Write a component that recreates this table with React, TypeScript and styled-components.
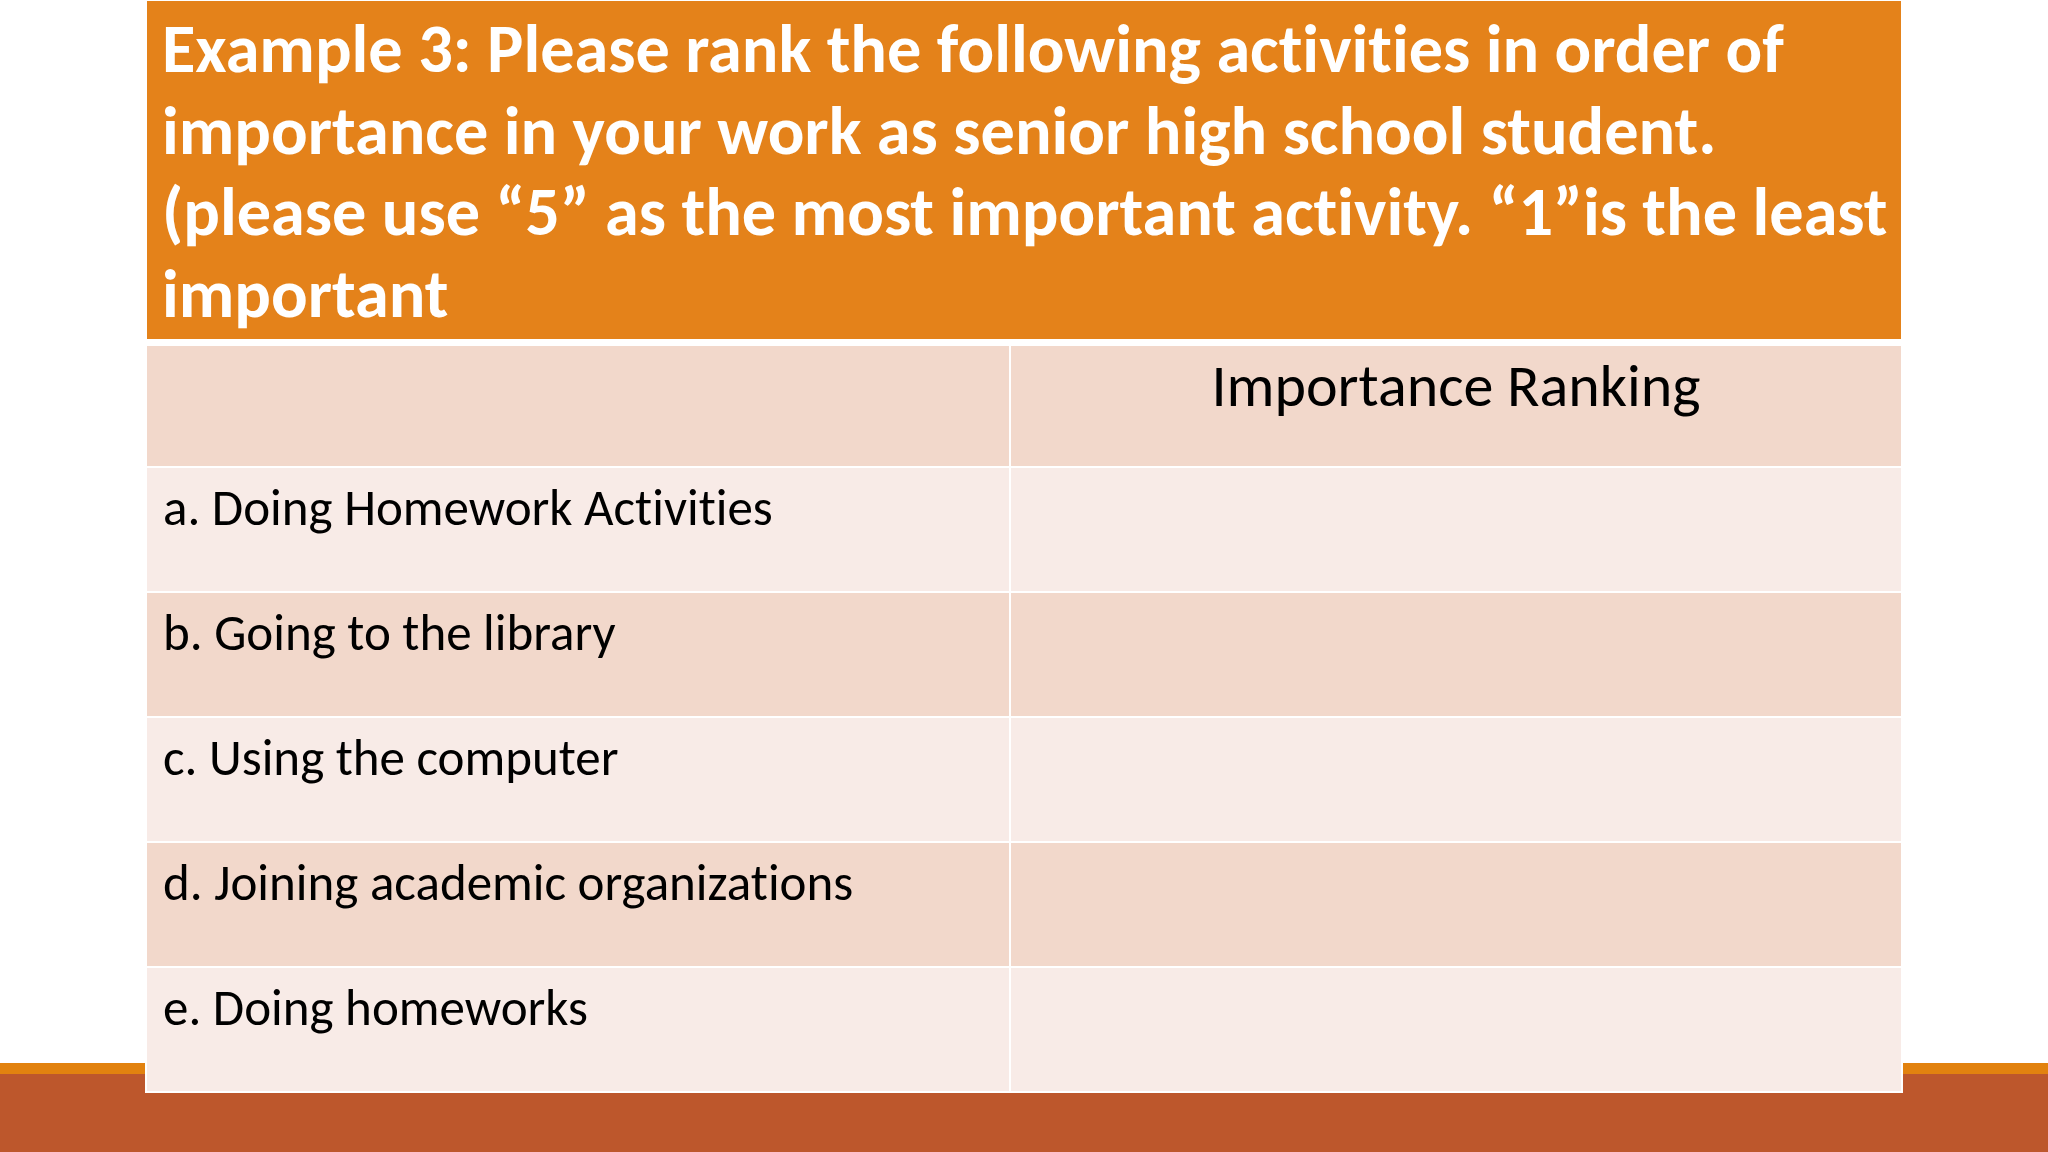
import React from "react";
import styled, { createGlobalStyle } from "styled-components";

const Global = createGlobalStyle`
  html, body { margin: 0; padding: 0; background: #ffffff; }
  body {
    font-family: "Carlito", "Lato", "Liberation Sans", sans-serif;
    font-variant-ligatures: none;
    font-feature-settings: "liga" 0, "clig" 0;
  }
`;

const Slide = styled.div`
  position: relative;
  width: 2048px;
  height: 1152px;
  overflow: hidden;
  background: #ffffff;
`;

const FooterBand = styled.div`
  position: absolute;
  left: 0;
  right: 0;
  bottom: 0;
  height: 89px;
  box-sizing: border-box;
  background: #bd572c;
  border-top: 11px solid #e2820f;
  z-index: 0;
`;

const Content = styled.div`
  position: relative;
  z-index: 1;
  margin-left: 145px;
  width: 1758px;
  padding-top: 1px;
  display: flex;
  flex-direction: column;
  gap: 5px;
`;

const TitleBox = styled.div`
  margin: 0 2px;
  height: 338px;
  box-sizing: border-box;
  background: #e4821a;
  padding: 7px 0 0 15px;
  color: #ffffff;
  font-weight: 700;
  font-size: 68.3px;
  line-height: 81.6px;
`;

const TitleLine = styled.span`
  display: block;
  white-space: nowrap;
`;

const Table = styled.div`
  display: grid;
  grid-template-columns: 862px 1fr;
  grid-template-rows: 120px repeat(5, 123px);
  gap: 2px;
  padding: 2px;
  background: #ffffff;
`;

const Cell = styled.div<{ $tone: "dark" | "light" }>`
  background: ${(p) => (p.$tone === "dark" ? "#f2d8cb" : "#f8ebe7")};
  color: #000000;
  font-size: 51px;
  line-height: 1.2;
  padding: 9px 0 0 16px;
  white-space: nowrap;
`;

const HeadCell = styled(Cell)`
  font-size: 60px;
  padding: 4px 0 0 0;
  text-align: center;
`;

const rows = [
  "a. Doing Homework Activities",
  "b. Going to the library",
  "c. Using the computer",
  "d. Joining academic organizations",
  "e. Doing homeworks",
];

export default function App() {
  return (
    <>
      <Global />
      <Slide>
        <FooterBand />
        <Content>
          <TitleBox>
            <TitleLine>Example 3: Please rank the following activities in order of</TitleLine>
            <TitleLine>importance in your work as senior high school student.</TitleLine>
            <TitleLine>(please use “5” as the most important activity. “1”is the least</TitleLine>
            <TitleLine>important</TitleLine>
          </TitleBox>
          <Table>
            <HeadCell $tone="dark" />
            <HeadCell $tone="dark">Importance Ranking</HeadCell>
            {rows.map((r, i) => (
              <React.Fragment key={r}>
                <Cell $tone={i % 2 === 0 ? "light" : "dark"}>{r}</Cell>
                <Cell $tone={i % 2 === 0 ? "light" : "dark"} />
              </React.Fragment>
            ))}
          </Table>
        </Content>
      </Slide>
    </>
  );
}
